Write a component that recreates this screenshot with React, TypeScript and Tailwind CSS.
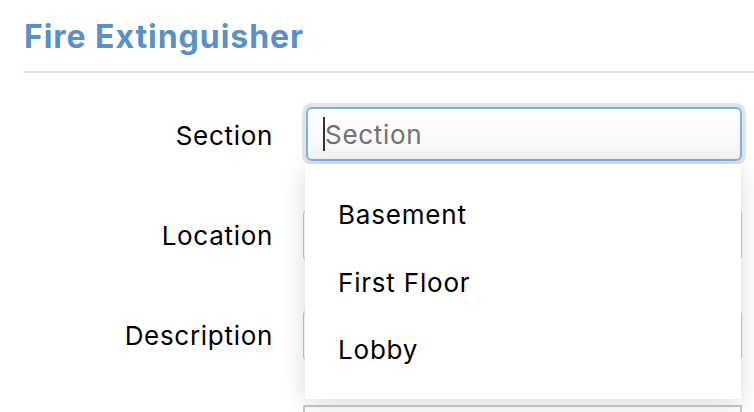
import React from 'react';

const App: React.FC = () => {
  return (
    <div className="w-[754px] h-[412px] overflow-hidden bg-white font-['Inter','Liberation_Sans',sans-serif]">
      {/* Header */}
      <div className="pl-6 pt-[17px]">
        <h1 className="text-[32px] leading-[40px] font-bold tracking-[0.95px] text-[#5b90c6]">Fire Extinguisher</h1>
      </div>
      <div className="ml-[23px] mt-[14px] h-[2px] bg-[#d7e3ef]" />

      {/* Form */}
      <div className="mt-[34px] flex flex-col">
        {/* Section row */}
        <div className="flex items-center">
          <label className="w-[273px] pt-[3px] text-right text-[26px] tracking-[0.7px] text-black">Section</label>
          <div className="relative ml-[33px] w-[436px]">
            <div className="h-[54px] rounded-md border-2 border-[#7cb1ea] ring-4 ring-[#e3e3e3] bg-gradient-to-b from-white to-[#f6f6f6] flex items-center pl-[15px]">
              <span className="w-[2px] h-[34px] bg-[#333]" />
              <span className="text-[26px] tracking-[0.7px] text-[#707070]">Section</span>
            </div>

            {/* Dropdown menu */}
            <div className="absolute left-[-1px] top-[57px] w-[436px] h-[235px] bg-white shadow-[0_4px_24px_rgba(0,0,0,0.15)] z-10 flex flex-col pt-[33px] pl-[33px]">
              <div className="h-[68px] text-[26px] leading-[36px] tracking-[0.8px] text-black">Basement</div>
              <div className="h-[67px] text-[26px] leading-[36px] tracking-[0.8px] text-black">First Floor</div>
              <div className="h-[67px] text-[26px] leading-[36px] tracking-[0.8px] text-black">Lobby</div>
            </div>
          </div>
        </div>

        {/* Location row */}
        <div className="flex items-center mt-[48px]">
          <label className="w-[273px] text-right text-[26px] tracking-[0.7px] text-black">Location</label>
          <div className="ml-[30px] w-[439px] h-[53px] rounded-md border border-[#c8c8c8]" />
        </div>

        {/* Description row */}
        <div className="flex items-center mt-[47px]">
          <label className="w-[273px] text-right text-[26px] tracking-[0.7px] text-black">Description</label>
          <div className="ml-[30px] w-[439px] h-[53px] rounded-md border border-[#c8c8c8]" />
        </div>

        {/* Next row */}
        <div className="flex items-start mt-[43px]">
          <div className="w-[273px]" />
          <div className="ml-[30px] w-[439px] h-[60px] border-2 border-[#c8c8c8]" />
        </div>
      </div>
    </div>
  );
};

export default App;
